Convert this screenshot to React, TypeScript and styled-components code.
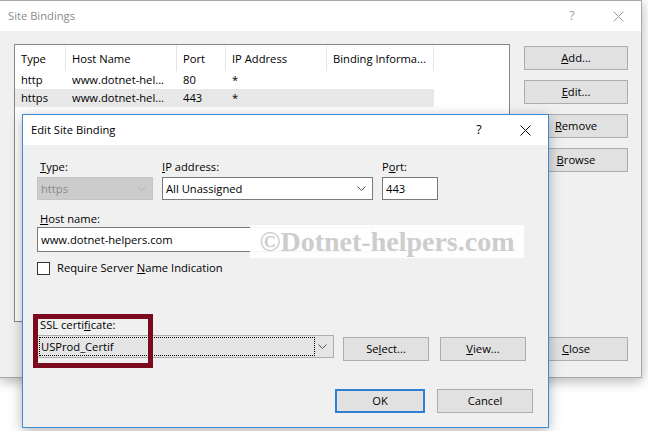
import React from 'react';
import styled, { createGlobalStyle } from 'styled-components';

const GlobalStyle = createGlobalStyle`
  html, body {
    margin: 0;
    padding: 0;
    background: #ffffff;
  }
  body {
    font-family: "Open Sans", "Noto Sans", sans-serif;
    font-size: 11.2px;
    line-height: 16px;
    color: #000;
  }
`;

const Desktop = styled.div`
  position: relative;
  width: 648px;
  height: 431px;
  overflow: hidden;
  background: #ffffff;
`;

const Window = styled.div<{ $left: number; $top: number; $width: number; $height: number; $active?: boolean }>`
  position: absolute;
  left: ${p => p.$left}px;
  top: ${p => p.$top}px;
  width: ${p => p.$width}px;
  height: ${p => p.$height}px;
  box-sizing: border-box;
  display: flex;
  flex-direction: column;
  background: #f0f0f0;
  border: 1px solid ${p => (p.$active ? '#3d8ad3' : '#a8a8a8')};
  box-shadow: 0 3px 12px rgba(0, 0, 0, 0.3);
`;

const TitleBar = styled.div`
  flex: 0 0 30px;
  display: flex;
  align-items: center;
  background: #ffffff;
  padding-left: 8px;
`;

const TitleText = styled.div<{ $dim?: boolean }>`
  flex: 1 1 auto;
  color: ${p => (p.$dim ? '#8c8c8c' : '#000')};
`;

const TitleButton = styled.div<{ $dim?: boolean }>`
  width: 46px;
  height: 30px;
  display: flex;
  align-items: center;
  justify-content: center;
  color: ${p => (p.$dim ? '#a0a0a0' : '#000')};
  font-size: 12.5px;
`;

const CloseGlyph: React.FC<{ color: string }> = ({ color }) => (
  <svg width="11" height="11" viewBox="0 0 11 11">
    <path d="M0.5 0.5 L10.5 10.5 M10.5 0.5 L0.5 10.5" stroke={color} strokeWidth="1" fill="none" />
  </svg>
);

const Chevron: React.FC<{ color: string }> = ({ color }) => (
  <svg width="9" height="5" viewBox="0 0 9 5">
    <polyline points="0.5,0.5 4.5,4.5 8.5,0.5" stroke={color} strokeWidth="1" fill="none" />
  </svg>
);

/* ---------- Site Bindings ---------- */

const OuterBody = styled.div`
  flex: 1 1 auto;
  display: flex;
  align-items: flex-start;
  gap: 14px;
  padding: 13px 12px 16px 14px;
`;

const ListBox = styled.div`
  box-sizing: border-box;
  width: 496px;
  height: 278px;
  background: #ffffff;
  border: 1px solid #828790;
`;

const Grid = styled.div<{ $selected?: boolean }>`
  display: grid;
  width: fit-content;
  grid-template-columns: 51px 111px 49px 101px 107px;
  background: ${p => (p.$selected ? '#e8e8e8' : 'transparent')};
`;

const HeaderCell = styled.div`
  height: 26px;
  line-height: 27px;
  padding-left: 6px;
  border-right: 1px solid #e5e5e5;
  white-space: nowrap;
  overflow: hidden;
`;

const RowCell = styled.div`
  height: 18px;
  line-height: 18px;
  padding-left: 6px;
  white-space: nowrap;
  overflow: hidden;
`;

const ButtonColumn = styled.div`
  align-self: stretch;
  width: 104px;
  display: flex;
  flex-direction: column;
  gap: 10px;
  padding-top: 2px;
`;

const Button = styled.div<{ $width?: number; $default?: boolean }>`
  box-sizing: border-box;
  width: ${p => (p.$width ? `${p.$width}px` : '100%')};
  height: 24px;
  display: flex;
  align-items: center;
  justify-content: center;
  background: #e1e1e1;
  border: ${p => (p.$default ? '2px solid #2f7fd0' : '1px solid #adadad')};
  flex: 0 0 auto;
`;

const BottomButton = styled(Button)`
  margin-top: auto;
`;

/* ---------- Edit Site Binding ---------- */

const DialogBody = styled.div`
  flex: 1 1 auto;
  display: flex;
  flex-direction: column;
  padding: 14px 15px 0 14px;
`;

const FieldRow = styled.div`
  display: flex;
  gap: 9px;
`;

const Field = styled.div<{ $width: number }>`
  width: ${p => p.$width}px;
  display: flex;
  flex-direction: column;
  gap: 2px;
`;

const Label = styled.div<{ $top?: number; $indent?: number }>`
  height: 16px;
  line-height: 16px;
  padding-left: ${p => p.$indent ?? 3}px;
  margin-top: ${p => p.$top ?? 0}px;
`;

const Select = styled.div<{ $variant: 'disabled' | 'white' | 'focus'; $width?: number }>`
  box-sizing: border-box;
  width: ${p => (p.$width ? `${p.$width}px` : '100%')};
  height: 23px;
  display: flex;
  align-items: center;
  justify-content: space-between;
  padding: 0 6px 0 3px;
  color: ${p => (p.$variant === 'disabled' ? '#8a8a8a' : '#000')};
  background: ${p => (p.$variant === 'disabled' ? '#cccccc' : p.$variant === 'white' ? '#ffffff' : '#e5e5e5')};
  border: 1px solid ${p => (p.$variant === 'disabled' ? '#c4c4c4' : p.$variant === 'white' ? '#7a7a7a' : '#adadad')};
`;

const FocusBox = styled.div`
  flex: 0 0 276px;
  box-sizing: border-box;
  height: 19px;
  line-height: 17px;
  border: 1px dotted #000;
  margin-left: -2px;
  padding-left: 1px;
`;

const TextInput = styled.div<{ $width: number; $height: number }>`
  box-sizing: border-box;
  width: ${p => p.$width}px;
  height: ${p => p.$height}px;
  display: flex;
  align-items: center;
  padding-left: 3px;
  background: #ffffff;
  border: 1px solid #7a7a7a;
`;

const CheckRow = styled.div`
  display: flex;
  align-items: center;
  gap: 7px;
  height: 16px;
  margin-top: 8px;
`;

const CheckBox = styled.div`
  box-sizing: border-box;
  width: 13px;
  height: 13px;
  background: #ffffff;
  border: 1px solid #333333;
`;

const CertRow = styled.div`
  display: flex;
  align-items: flex-start;
  margin-top: 2px;
  gap: 9px;
`;

const CertButtons = styled.div`
  display: flex;
  gap: 11px;
  margin-top: 2px;
`;

const Footer = styled.div`
  display: flex;
  justify-content: flex-end;
  gap: 12px;
  margin-top: 28px;
`;

const Watermark = styled.div`
  position: absolute;
  left: 250px;
  top: 225px;
  width: 274px;
  height: 33px;
  display: flex;
  align-items: center;
  justify-content: center;
  background: rgba(255, 255, 255, 0.92);
  color: #cdcdcd;
  font-family: "Liberation Serif", serif;
  font-weight: bold;
  font-size: 28px;
  white-space: nowrap;
`;

const Highlight = styled.div`
  position: absolute;
  left: 33px;
  top: 314px;
  width: 120px;
  height: 54px;
  box-sizing: border-box;
  border: 5px solid #7c0a1e;
`;

const columns = ['Type', 'Host Name', 'Port', 'IP Address', 'Binding Informa...'];
const rows = [
  { type: 'http', host: 'www.dotnet-hel...', port: '80', ip: '*', info: '' },
  { type: 'https', host: 'www.dotnet-hel...', port: '443', ip: '*', info: '' },
];

export default function App() {
  return (
    <Desktop>
      <GlobalStyle />

      <Window $left={-1} $top={0} $width={643} $height={378}>
        <TitleBar>
          <TitleText $dim>Site Bindings</TitleText>
          <TitleButton $dim>?</TitleButton>
          <TitleButton $dim>
            <CloseGlyph color="#9a9a9a" />
          </TitleButton>
        </TitleBar>
        <OuterBody>
          <ListBox>
            <Grid>
              {columns.map(c => (
                <HeaderCell key={c}>{c}</HeaderCell>
              ))}
            </Grid>
            {rows.map((r, i) => (
              <Grid key={r.type} $selected={i === 1}>
                <RowCell>{r.type}</RowCell>
                <RowCell>{r.host}</RowCell>
                <RowCell>{r.port}</RowCell>
                <RowCell>{r.ip}</RowCell>
                <RowCell>{r.info}</RowCell>
              </Grid>
            ))}
          </ListBox>
          <ButtonColumn>
            <Button>
              <u>A</u>dd...
            </Button>
            <Button>
              <u>E</u>dit...
            </Button>
            <Button>
              <u>R</u>emove
            </Button>
            <Button>
              <u>B</u>rowse
            </Button>
            <BottomButton>
              <u>C</u>lose
            </BottomButton>
          </ButtonColumn>
        </OuterBody>
      </Window>

      <Window $left={22} $top={114} $width={527} $height={314} $active>
        <TitleBar>
          <TitleText>Edit Site Binding</TitleText>
          <TitleButton>?</TitleButton>
          <TitleButton>
            <CloseGlyph color="#111" />
          </TitleButton>
        </TitleBar>
        <DialogBody>
          <FieldRow>
            <Field $width={116}>
              <Label>
                <u>T</u>ype:
              </Label>
              <Select $variant="disabled">
                https
                <Chevron color="#b4b4b4" />
              </Select>
            </Field>
            <Field $width={211}>
              <Label $indent={0}>
                <u>I</u>P address:
              </Label>
              <Select $variant="white">
                All Unassigned
                <Chevron color="#555" />
              </Select>
            </Field>
            <Field $width={56}>
              <Label $indent={0}>
                P<u>o</u>rt:
              </Label>
              <TextInput $width={56} $height={23}>
                443
              </TextInput>
            </Field>
          </FieldRow>

          <Label $top={11}>
            <u>H</u>ost name:
          </Label>
          <TextInput $width={336} $height={25}>
            www.dotnet-helpers.com
          </TextInput>

          <CheckRow>
            <CheckBox />
            <span>
              Require Server <u>N</u>ame Indication
            </span>
          </CheckRow>

          <Label $top={41}>
            SSL certi<u>f</u>icate:
          </Label>
          <CertRow>
            <Select $variant="focus" $width={297}>
              <FocusBox>USProd_Certif</FocusBox>
              <Chevron color="#555" />
            </Select>
            <CertButtons>
              <Button $width={86}>
                Se<u>l</u>ect...
              </Button>
              <Button $width={86}>
                <u>V</u>iew...
              </Button>
            </CertButtons>
          </CertRow>

          <Footer>
            <Button $width={90} $default>
              OK
            </Button>
            <Button $width={96}>Cancel</Button>
          </Footer>
        </DialogBody>
      </Window>

      <Watermark>©Dotnet-helpers.com</Watermark>
      <Highlight />
    </Desktop>
  );
}
